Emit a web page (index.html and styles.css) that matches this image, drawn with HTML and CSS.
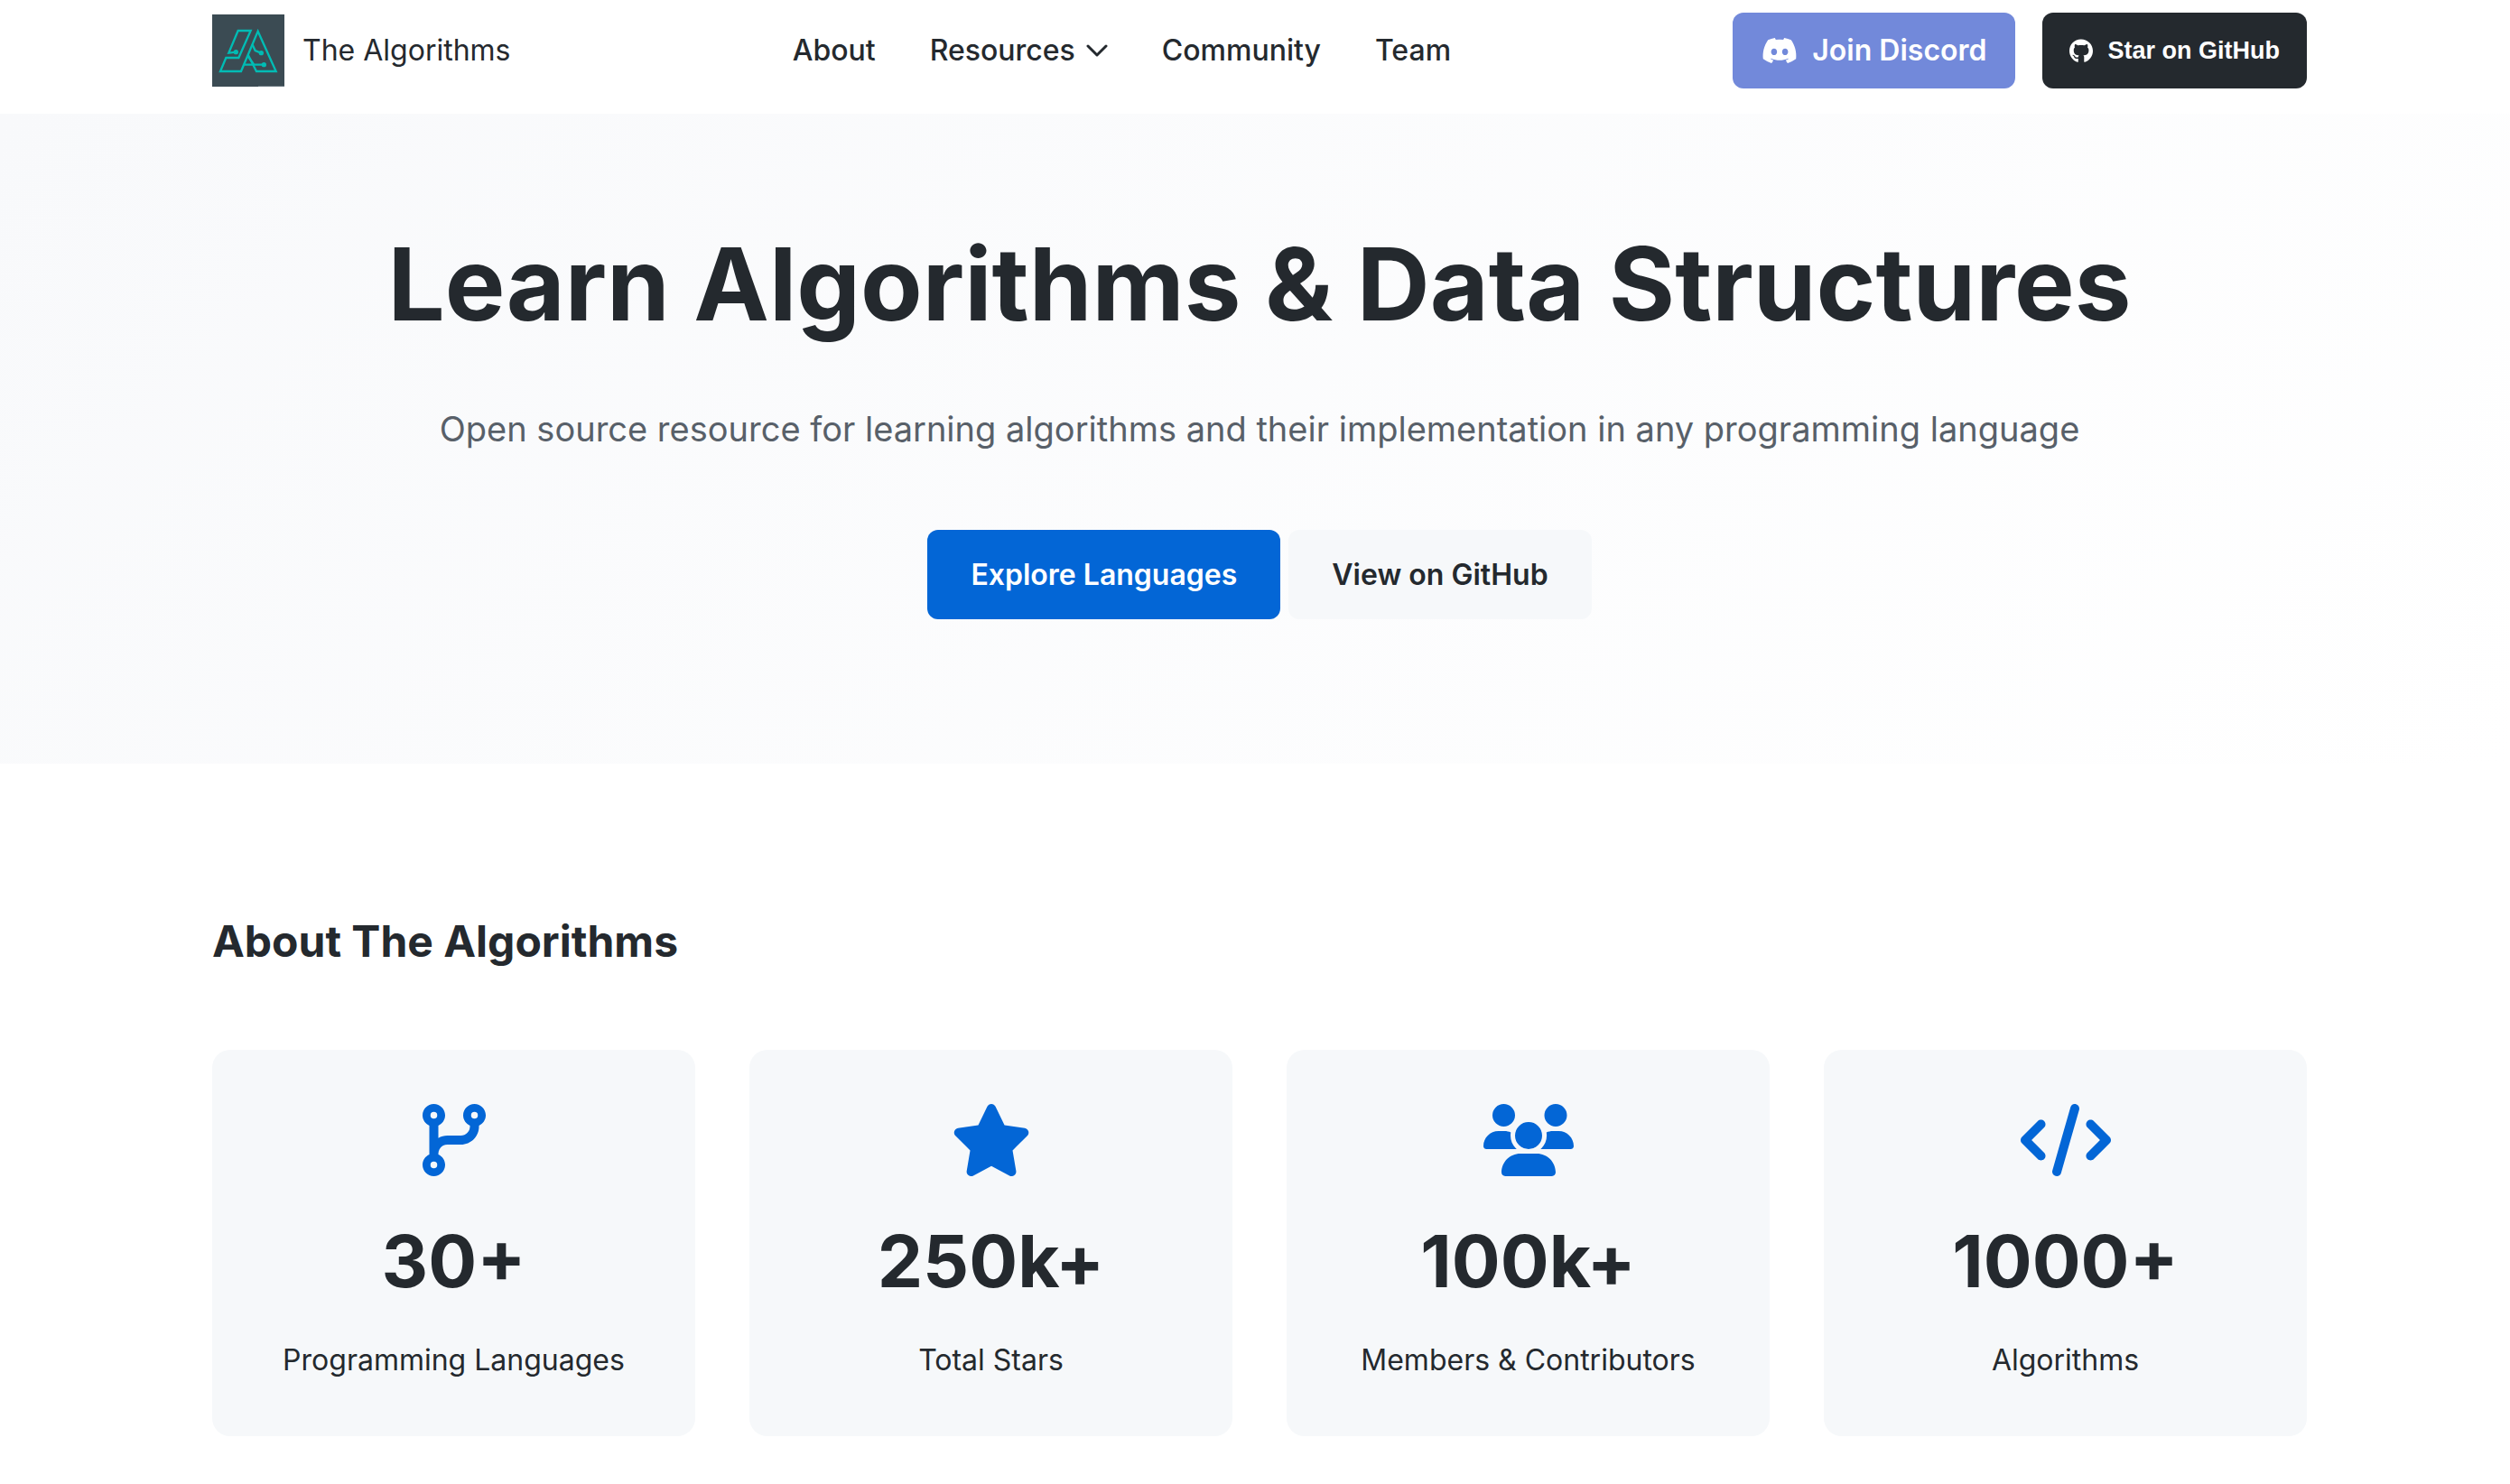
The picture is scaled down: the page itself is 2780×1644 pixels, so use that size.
FILE: index.html
```html
<!DOCTYPE html>
<html lang="en">
<head>
<meta charset="utf-8">
<meta name="viewport" content="width=device-width, initial-scale=1">
<title>The Algorithms</title>
<link rel="stylesheet" href="styles.css">
</head>
<body>
<header class="site-header">
  <a class="brand" href="#">
    <svg class="brand-logo" viewBox="0 0 240 240" aria-hidden="true">
      <rect width="240" height="240" fill="#3b4b53"/>
      <path d="M153 238.500H240" stroke="#66757d" stroke-width="3"/>
      <g fill="none" stroke="#00bcb4" stroke-width="7">
        <path d="M78 125L55 128L86 54H128L88 144H46L27 189H96L152 56L212 189H147L120 136"/>
        <path d="M133 99L143 120L162 128M104 167H172M118 138L139 167"/>
      </g>
      <circle cx="79" cy="125" r="8" fill="#00bcb4"/>
      <circle cx="163" cy="128" r="8" fill="#00bcb4"/>
      <circle cx="172" cy="167" r="8" fill="#00bcb4"/>
    </svg>
    <span>The Algorithms</span>
  </a>
  <nav class="site-nav" aria-label="Main">
    <a href="#about">About</a>
    <button class="nav-menu" type="button" aria-haspopup="true">Resources
      <svg class="chevron" viewBox="0 0 24 14" aria-hidden="true"><path d="M2 2L12 12L22 2" fill="none" stroke="currentColor" stroke-width="3" stroke-linecap="round" stroke-linejoin="round"/></svg>
    </button>
    <a href="#community">Community</a>
    <a href="#team">Team</a>
  </nav>
  <div class="header-actions">
    <a class="header-button discord" href="#">
      <svg class="discord-icon" viewBox="0 0 640 512" aria-hidden="true"><path fill="currentColor" d="M524.531,69.836a1.500,1.500,0,0,0-.764-.7A485.065,485.065,0,0,0,404.081,32.030a1.816,1.816,0,0,0-1.923.91,337.461,337.461,0,0,0-14.900,30.600,447.848,447.848,0,0,0-134.426,0,309.541,309.541,0,0,0-15.135-30.600,1.890,1.890,0,0,0-1.924-.91A483.689,483.689,0,0,0,116.085,69.137a1.712,1.712,0,0,0-.788.676C39.068,183.651,18.186,294.690,28.430,404.354a2.016,2.016,0,0,0,.765,1.375A487.666,487.666,0,0,0,176.020,479.918a1.900,1.900,0,0,0,2.063-.676A348.200,348.200,0,0,0,208.120,430.400a1.860,1.860,0,0,0-1.019-2.588,321.173,321.173,0,0,1-45.868-21.853,1.885,1.885,0,0,1-.185-3.126c3.082-2.309,6.166-4.711,9.109-7.137a1.819,1.819,0,0,1,1.900-.256c96.229,43.917,200.410,43.917,295.500,0a1.812,1.812,0,0,1,1.924.233c2.944,2.426,6.027,4.851,9.132,7.160a1.884,1.884,0,0,1-.162,3.126,301.407,301.407,0,0,1-45.890,21.830,1.875,1.875,0,0,0-1,2.611,391.055,391.055,0,0,0,30.014,48.815,1.864,1.864,0,0,0,2.063.7A486.048,486.048,0,0,0,610.700,405.729a1.882,1.882,0,0,0,.765-1.352C623.729,277.594,590.933,167.465,524.531,69.836ZM222.491,337.580c-28.972,0-52.844-26.587-52.844-59.239S193.056,219.100,222.491,219.100c29.665,0,53.306,26.820,52.843,59.239C275.334,310.993,251.924,337.580,222.491,337.580Zm195.380,0c-28.971,0-52.843-26.587-52.843-59.239S388.437,219.100,417.871,219.100c29.667,0,53.307,26.820,52.844,59.239C470.715,310.993,447.538,337.580,417.871,337.580Z"/></svg>
      Join Discord
    </a>
    <button class="header-button github" type="button">
      <svg class="github-icon" viewBox="0 0 496 512" aria-hidden="true"><path fill="currentColor" fill-rule="evenodd" d="M244.800 8C106.100 8 0 113.300 0 252c0 110.900 69.800 205.800 169.500 239.200 12.800 2.300 17.300-5.600 17.300-12.100 0-6.200-.3-40.400-.3-61.400 0 0-70 15-84.700-29.800 0 0-11.400-29.100-27.800-36.600 0 0-22.900-15.700 1.600-15.400 0 0 24.900 2 38.600 25.800 21.900 38.600 58.600 27.500 72.900 20.900 2.300-16 8.800-27.100 16-33.700-55.900-6.200-112.300-14.300-112.300-110.500 0-27.500 7.600-41.300 23.600-58.900-2.600-6.500-11.100-33.300 2.600-67.900 20.900-6.500 69 27 69 27 20-5.600 41.500-8.500 62.800-8.500s42.800 2.900 62.800 8.500c0 0 48.100-33.600 69-27 13.700 34.700 5.200 61.400 2.600 67.900 16 17.700 25.800 31.500 25.800 58.900 0 96.500-58.900 104.200-114.800 110.500 9.200 7.900 17 22.900 17 46.400 0 33.700-.3 75.400-.3 83.600 0 6.500 4.600 14.400 17.300 12.100C428.200 457.800 496 362.900 496 252 496 113.300 383.500 8 244.800 8z"/></svg>
      Star on GitHub
    </button>
  </div>
</header>
<main>
  <section class="hero">
    <h1>Learn Algorithms &amp; Data Structures</h1>
    <p>Open source resource for learning algorithms and their implementation in any programming language</p>
    <div class="hero-actions">
      <a class="hero-button primary" href="#languages">Explore Languages</a>
      <a class="hero-button secondary" href="#github">View on GitHub</a>
    </div>
  </section>
  <section class="about" id="about">
    <h2>About The Algorithms</h2>
    <div class="stats">
      <article class="stat">
        <svg class="stat-icon" viewBox="0 0 448 512" aria-hidden="true"><path fill="currentColor" fill-rule="evenodd" d="M160 80c0 32.800-19.700 61-48 73.300v87.800c18.800-10.900 40.700-17.100 64-17.100h96c35.300 0 64-28.700 64-64v-6.700C307.700 141 288 112.800 288 80c0-44.200 35.800-80 80-80s80 35.800 80 80c0 32.800-19.700 61-48 73.300V160c0 70.700-57.300 128-128 128H176c-35.300 0-64 28.700-64 64v6.700c28.300 12.300 48 40.500 48 73.300c0 44.200-35.800 80-80 80s-80-35.800-80-80c0-32.800 19.700-61 48-73.300V153.300C19.700 141 0 112.800 0 80C0 35.800 35.800 0 80 0s80 35.800 80 80zM80 104a24 24 0 1 0 0-48a24 24 0 1 0 0 48zm288 0a24 24 0 1 0 0-48a24 24 0 1 0 0 48zM80 456a24 24 0 1 0 0-48a24 24 0 1 0 0 48z"/></svg>
        <h3>30+</h3>
        <p>Programming Languages</p>
      </article>
      <article class="stat">
        <svg class="stat-icon" viewBox="0 0 576 512" aria-hidden="true"><path fill="currentColor" d="M316.900 18C311.600 7 300.400 0 288.100 0s-23.400 7-28.800 18L195 150.300 51.400 171.500c-12 1.800-22 10.200-25.700 21.700s-.7 24.200 7.900 32.700L137.800 329 113.200 474.700c-2 12 3 24.200 12.900 31.300s23 8 33.800 2.300l128.300-68.500 128.300 68.500c10.800 5.700 23.900 4.900 33.800-2.300s14.900-19.300 12.900-31.300L438.500 329 542.700 225.900c8.600-8.500 11.700-21.200 7.900-32.700s-13.700-19.900-25.700-21.700L381.200 150.300 316.900 18z"/></svg>
        <h3>250k+</h3>
        <p>Total Stars</p>
      </article>
      <article class="stat">
        <svg class="stat-icon" viewBox="0 0 640 512" aria-hidden="true"><path fill="currentColor" d="M144 0a80 80 0 1 1 0 160A80 80 0 1 1 144 0zM512 0a80 80 0 1 1 0 160A80 80 0 1 1 512 0zM0 298.700C0 239.800 47.800 192 106.700 192h42.700c15.900 0 31 3.500 44.600 9.700c-1.300 7.200-1.900 14.700-1.900 22.300c0 38.200 16.800 72.500 43.300 96H21.300C9.600 320 0 310.400 0 298.700zM405.300 320c26.600-23.500 43.300-57.800 43.300-96c0-7.600-.7-15-1.900-22.300c13.600-6.300 28.700-9.700 44.600-9.700h42.700C592.200 192 640 239.800 640 298.700c0 11.800-9.600 21.300-21.300 21.300H405.300zM224 224a96 96 0 1 1 192 0 96 96 0 1 1 -192 0zM128 485.300C128 411.700 187.700 352 261.300 352H378.700C452.300 352 512 411.700 512 485.300c0 14.700-11.900 26.700-26.700 26.700H154.700c-14.700 0-26.700-11.900-26.700-26.700z"/></svg>
        <h3>100k+</h3>
        <p>Members &amp; Contributors</p>
      </article>
      <article class="stat">
        <svg class="stat-icon" viewBox="0 0 640 512" aria-hidden="true"><path fill="currentColor" d="M392.800 1.200c-17-4.900-34.700 5-39.600 22l-128 448c-4.900 17 5 34.700 22 39.600s34.700-5 39.600-22l128-448c4.900-17-5-34.700-22-39.600zm80.600 120.100c-12.500 12.500-12.500 32.800 0 45.300L562.700 256l-89.400 89.400c-12.500 12.500-12.500 32.800 0 45.300s32.800 12.500 45.300 0l112-112c12.500-12.500 12.500-32.800 0-45.300l-112-112c-12.500-12.500-32.800-12.500-45.300 0zm-306.700 0c-12.500-12.500-32.800-12.500-45.300 0l-112 112c-12.500 12.500-12.500 32.800 0 45.300l112 112c12.500 12.500 32.800 12.500 45.300 0s12.500-32.800 0-45.300L77.300 256l89.400-89.400c12.500-12.500 12.500-32.800 0-45.300z"/></svg>
        <h3>1000+</h3>
        <p>Algorithms</p>
      </article>
    </div>
  </section>
</main>
</body>
</html>
```

FILE: styles.css
```css
* {
  box-sizing: border-box;
}

body {
  margin: 0;
  background: #fff;
  color: #24292e;
  font-family: Inter, "Liberation Sans", sans-serif;
  font-size: 32px;
  line-height: 48px;
}

a {
  color: inherit;
  text-decoration: none;
}

h1,
h2,
h3,
p {
  margin: 0;
}

svg {
  display: block;
  flex: none;
}

.site-header {
  display: flex;
  justify-content: space-between;
  align-items: center;
  padding: 14px 225px 28px 235px;
}

.brand,
.site-nav,
.header-actions,
.header-button,
.nav-menu {
  display: flex;
  align-items: center;
}

.brand {
  gap: 20px;
}

.brand-logo {
  width: 80px;
  height: 80px;
}

.site-nav {
  gap: 60px;
  font-weight: 500;
}

.nav-menu {
  gap: 12px;
  padding: 0;
  border: 0;
  background: none;
  color: inherit;
  font: inherit;
}

.chevron {
  width: 24px;
  height: 14px;
}

.header-actions {
  gap: 30px;
}

.header-button {
  height: 84px;
  padding: 0 32px;
  border: 0;
  border-radius: 12px;
  color: #fff;
  font-weight: 600;
}

.discord {
  gap: 16px;
  background: #7289da;
}

.discord-icon {
  width: 40px;
  height: 32px;
}

.github {
  gap: 16px;
  padding: 0 30px;
  background: #24292e;
  font-family: "Liberation Sans", sans-serif;
  font-size: 27px;
}

.github-icon {
  width: 26px;
  height: 27px;
}

.hero {
  padding: 120px 225px 160px 235px;
  background: linear-gradient(135deg, #f8f9fb 0%, #fff 100%);
  text-align: center;
}

.hero h1 {
  font-size: 112px;
  font-weight: 700;
  line-height: 137px;
}

.hero p {
  margin-top: 62px;
  color: #586069;
  font-size: 38px;
  line-height: 60px;
}

.hero-actions {
  display: flex;
  justify-content: center;
  gap: 9px;
  margin-top: 82px;
}

.hero-button {
  padding: 26px 48px 25px;
  border-radius: 12px;
  font-weight: 600;
}

.primary {
  background: #0366d6;
  color: #fff;
}

.secondary {
  background: #f6f8fa;
}

.about {
  padding: 160px 225px 52px 235px;
}

.about h2 {
  font-size: 48px;
  font-weight: 700;
  line-height: 74px;
}

.stats {
  display: grid;
  grid-template-columns: repeat(4, 1fr);
  gap: 60px;
  margin-top: 83px;
}

.stat {
  display: flex;
  flex-direction: column;
  align-items: center;
  padding: 60px 40px;
  border-radius: 20px;
  background: #f6f8fa;
  text-align: center;
}

.stat-icon {
  height: 80px;
  color: #0366d6;
}

.stat h3 {
  margin-top: 34px;
  font-size: 80px;
  font-weight: 700;
  line-height: 120px;
}

.stat p {
  margin-top: 26px;
}
```
